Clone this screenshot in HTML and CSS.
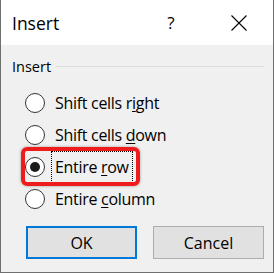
FILE: index.html
```html
<!DOCTYPE html>
<html lang="en">
<head>
  <meta charset="UTF-8" />
  <title>Insert</title>
  <link rel="stylesheet" href="styles.css">
</head>
<body>
  <div class="dialog">
    <div class="titlebar">
      <div class="title">Insert</div>
      <div class="help">?</div>
      <div class="close">
        <svg width="16" height="16" viewBox="0 0 16 16"><path d="M0.5 0.5 L15.5 15.5 M15.5 0.5 L0.5 15.5" stroke="#000" stroke-width="1.1" fill="none"/></svg>
      </div>
    </div>

    <div class="content">
      <div class="group-label"><span>Insert</span><div class="rule"></div></div>

      <div class="options">
        <div class="option"><span class="radio"></span><span class="label">Shift cells r<u>i</u>ght</span></div>
        <div class="option"><span class="radio"></span><span class="label">Shift cells <u>d</u>own</span></div>
        <div class="option selected"><span class="radio"></span><span class="label focus">Entire <u>r</u>ow</span>
          <div class="highlight"></div>
        </div>
        <div class="option"><span class="radio"></span><span class="label">Entire <u>c</u>olumn</span></div>
      </div>

      <div class="buttons">
        <button class="btn default">OK</button>
        <button class="btn">Cancel</button>
      </div>
    </div>
  </div>
</body>
</html>
```

FILE: styles.css
```css
body {
  margin: 0;
  background: #6f6f6f;
  font-family: "Segoe UI", "Open Sans", "Noto Sans", sans-serif;
}

.dialog {
  width: 272px;
  height: 272px;
  border-left: 1px solid #6f6f6f;
  display: flex;
  flex-direction: column;
  background: #f0f0f0;
}

.titlebar {
  height: 45px;
  background: #fff;
  display: flex;
  align-items: center;
  flex-shrink: 0;
}

.title {
  font-size: 17.5px;
  padding-left: 11px;
  padding-top: 1px;
  flex: 1;
  color: #000;
}

.help {
  font-size: 17px;
  width: 20px;
  text-align: center;
  margin-right: 50px;
}

.close {
  width: 16px;
  height: 16px;
  margin-right: 26px;
  display: flex;
}

.content {
  flex: 1;
  padding: 13px 9px 0 11px;
}

.group-label {
  display: flex;
  align-items: center;
  font-size: 14.5px;
  color: #000;
  height: 16px;
}

.rule {
  flex: 1;
  height: 1px;
  background: #dcdcdc;
  margin-left: 5px;
  margin-top: 1px;
}

.options {
  padding-top: 13px;
  display: flex;
  flex-direction: column;
}

.option {
  position: relative;
  height: 32px;
  display: flex;
  align-items: center;
  font-size: 16px;
  padding-left: 13px;
}

.radio {
  width: 20px;
  height: 20px;
  border: 1px solid #333;
  border-radius: 50%;
  background: #fff;
  box-sizing: border-box;
  display: flex;
  align-items: center;
  justify-content: center;
  flex-shrink: 0;
}

.selected .radio::after {
  content: "";
  width: 10px;
  height: 10px;
  border-radius: 50%;
  background: #1a1a1a;
}

.label {
  margin-left: 9px;
  padding: 2px 1px;
  letter-spacing: -0.3px;
}

.label u {
  text-decoration-thickness: 1px;
  text-underline-offset: 2px;
}

.focus {
  outline: 1px dotted #000;
  outline-offset: 2px;
}

.highlight {
  position: absolute;
  left: 9px;
  top: -4px;
  width: 119px;
  height: 39px;
  box-sizing: border-box;
  border: 4px solid #ee1c1c;
  border-radius: 6px;
  box-shadow: 0 0 3px rgba(0, 0, 0, 0.35);
}

.buttons {
  display: flex;
  gap: 16px;
  margin-top: 11px;
  padding-left: 14px;
}

.btn {
  width: 111px;
  height: 33px;
  background: #e1e1e1;
  border: 1px solid #adadad;
  font-family: inherit;
  font-size: 16px;
  color: #000;
  padding: 0;
}

.btn.default {
  border: 2px solid #0078d7;
}
```
